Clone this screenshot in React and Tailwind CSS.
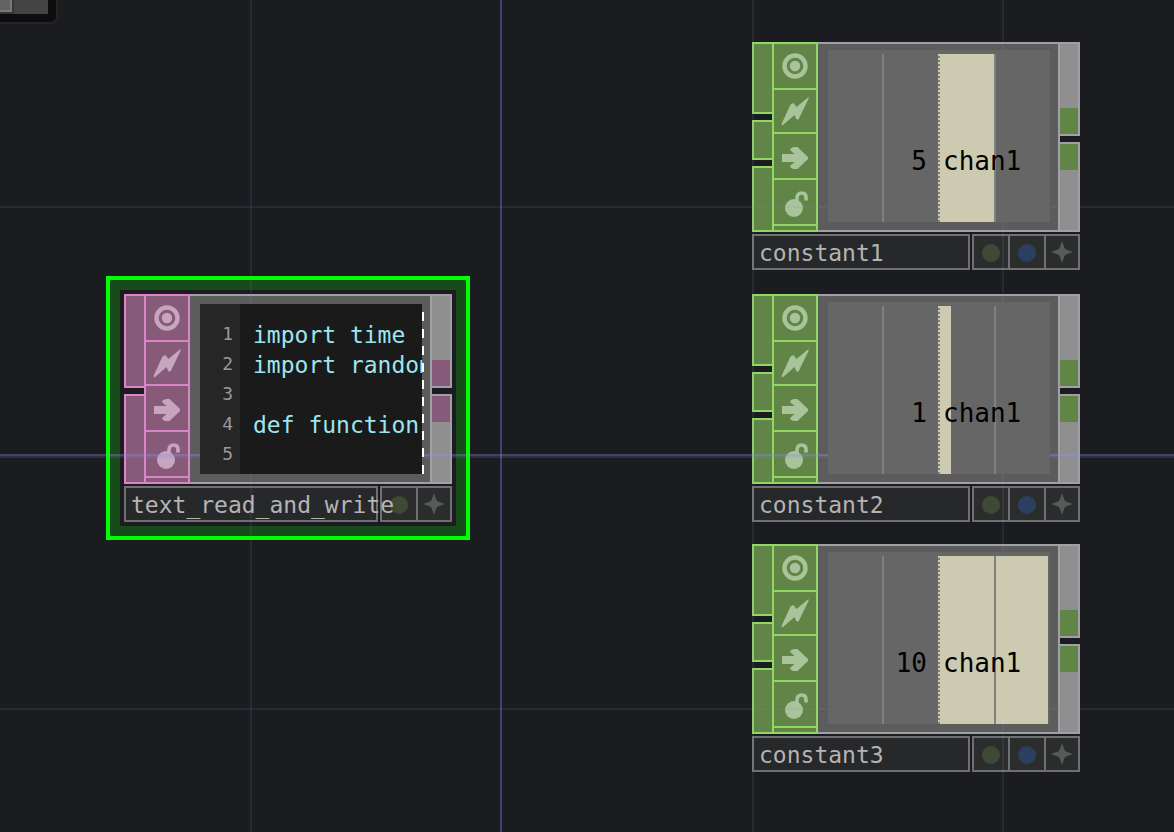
const palettes = {
  chop: {
    border: "border-[#90d765]",
    line: "bg-[#90d765]",
    fill: "bg-[#608546]",
    icon: "text-[#a9c39a]",
  },
  dat: {
    border: "border-[#dc84c8]",
    line: "bg-[#dc84c8]",
    fill: "bg-[#885a79]",
    icon: "text-[#c6a6bf]",
  },
}

const constants = [
  { name: "constant1", value: 5, top: "top-[42px]" },
  { name: "constant2", value: 1, top: "top-[294px]" },
  { name: "constant3", value: 10, top: "top-[544px]" },
]

const codeLines = ["import time", "import random", "", "def function():", ""]

function ViewerIcon() {
  return (
    <svg width="26" height="26" viewBox="0 0 26 26" fill="none">
      <circle cx="13" cy="13" r="10.5" stroke="currentColor" strokeWidth="4.4" />
      <circle cx="13" cy="13" r="5.2" fill="currentColor" />
    </svg>
  )
}

function BoltIcon() {
  return (
    <svg width="28" height="30" viewBox="0 0 28 30" fill="currentColor">
      <path d="M27.5 1 L27.5 3 L17.5 23.5 L15.5 23.5 L13.5 19 L1.5 29.5 L0.5 28 L9.5 8.5 L12.5 7 L15.5 11 Z" />
    </svg>
  )
}

function ArrowIcon() {
  return (
    <svg width="26" height="24" viewBox="0 0 26 24" fill="currentColor">
      <path d="M0 8 H12.5 L8 4 Q8.5 1.5 12 1 H15.5 L26 11 V13 L15.5 23 H12 Q8.5 22.5 8 20 L12.5 16 H0 Z" />
    </svg>
  )
}

function LockIcon() {
  return (
    <svg width="26" height="30" viewBox="0 0 26 30" fill="none">
      <circle cx="12" cy="20" r="9" fill="currentColor" />
      <path d="M15 14 V9.5 Q15.5 5 19.5 5 Q24 5 24 9.5 V12.5" stroke="currentColor" strokeWidth="3.6" />
    </svg>
  )
}

function StarIcon() {
  return (
    <svg width="22" height="22" viewBox="0 0 22 22" fill="#585a58">
      <path d="M11 0 L13.5 7 L15 8.5 L22 11 L15 13.5 L13.5 15 L11 22 L8.5 15 L7 13.5 L0 11 L7 8.5 L8.5 7 Z" />
    </svg>
  )
}

function Flag({ label, height, children }) {
  return (
    <button aria-label={label} className={`flex w-full shrink-0 items-center justify-center ${height}`}>
      {children}
    </button>
  )
}

function Flags({ palette }) {
  return (
    <div className={`flex w-[46px] shrink-0 flex-col border-2 ${palette.border} ${palette.fill} ${palette.icon}`}>
      <Flag label="Viewer active" height="h-11">
        <ViewerIcon />
      </Flag>
      <div className={`h-0.5 ${palette.line}`} />
      <Flag label="Bypass" height="h-[42px]">
        <BoltIcon />
      </Flag>
      <div className={`h-0.5 ${palette.line}`} />
      <Flag label="Export" height="h-11 pt-1">
        <ArrowIcon />
      </Flag>
      <div className={`h-0.5 ${palette.line}`} />
      <Flag label="Lock" height="h-11 pt-0.5">
        <LockIcon />
      </Flag>
      <div className={`h-0.5 ${palette.line}`} />
    </div>
  )
}

function Outputs({ palette }) {
  return (
    <div className="flex w-5 shrink-0 flex-col gap-1.5">
      <div className="flex h-[94px] flex-col justify-end border-y-2 border-r-2 border-[#a0a0a6] bg-[#8f8f8f]">
        <div className={`h-[26px] ${palette.fill}`} />
      </div>
      <div className="grow border-y-2 border-r-2 border-[#a0a0a6] bg-[#8f8f8f]">
        <div className={`h-[26px] ${palette.fill}`} />
      </div>
    </div>
  )
}

function Operator({ kind, name, inputs, children }) {
  const palette = palettes[kind]
  return (
    <div className="flex w-[328px] flex-col gap-0.5">
      <div className="flex h-[190px]">
        <div className="flex w-5 shrink-0 flex-col gap-1.5">
          {inputs.map((size, i) => (
            <div key={i} className={`border-y-2 border-l-2 ${size} ${palette.border} ${palette.fill}`} />
          ))}
        </div>
        <Flags palette={palette} />
        <div className="flex min-w-0 grow border-y-2 border-r-2 border-[#a0a0a6] bg-[#5c5c5c]">{children}</div>
        <Outputs palette={palette} />
      </div>
      <div className="flex h-9 gap-0.5">
        <div className="flex min-w-0 grow items-center border-2 border-[#707074] bg-[#27282a] pt-0.5 pl-[5px]">
          <span className="relative z-20 whitespace-nowrap text-[23px] leading-8 text-[#b4b4b4]">{name}</span>
        </div>
        <div className="flex shrink-0 divide-x-2 divide-[#707074] border-2 border-[#707074] bg-[#2b2d2c]">
          <button aria-label="Display" className="flex w-9 items-center justify-center pt-0.5">
            <span className="size-[18px] rounded-full bg-[#3e4a36]" />
          </button>
          {kind === "chop" && (
            <button aria-label="Export flag" className="flex w-9 items-center justify-center pt-0.5">
              <span className="size-[18px] rounded-full bg-[#2d3f60]" />
            </button>
          )}
          <button aria-label="Expose" className="flex w-8 items-center justify-center">
            <StarIcon />
          </button>
        </div>
      </div>
    </div>
  )
}

function ChannelViewer({ value }) {
  // the bar starts at the zero axis and is cut off at the viewer edge
  const width = Math.min(value * 11, 108)
  return (
    <div className="relative z-20 mt-1.5 mr-2 mb-2 ml-2.5 grow bg-[#666666]">
      <div className="absolute top-1 bottom-0 left-[112px] bg-[#cccbb2]" style={{ width }} />
      <div className="absolute top-1 bottom-0 left-[54px] w-0.5 bg-[#808080]" />
      <div className="absolute top-1 bottom-0 left-[166px] w-0.5 bg-[#808080]" />
      <div className="absolute top-1 bottom-0 left-[110px] w-0.5 bg-[repeating-linear-gradient(to_bottom,#cccbb2_0px,#cccbb2_2px,#808080_2px,#808080_4px)]" />
      <div className="absolute inset-x-0 top-[95px] flex text-[26px] leading-8 text-black">
        <span className="w-[99px] text-right">{value}</span>
        <span className="ml-4">chan1</span>
      </div>
    </div>
  )
}

function CodeViewer() {
  return (
    <div className="relative z-20 mt-2 mr-1.5 mb-2 ml-2.5 flex min-w-0 grow overflow-hidden">
      <div className="w-10 shrink-0 bg-[#262626] pt-[15px] pr-[7px] text-right text-[18px] leading-[30px] text-[#9a9a9a]">
        {codeLines.map((_, i) => (
          <div key={i} className="h-[30px]">
            {i + 1}
          </div>
        ))}
      </div>
      <pre className="min-w-0 grow overflow-hidden bg-[#1a1a1a] pt-4 pl-[13px] font-[DejaVu_Sans_Mono,monospace] text-[23px] leading-[30px] text-[#9de5f0]">
        {codeLines.join("\n")}
      </pre>
      <div className="absolute top-0 right-0 h-2 w-0.5 bg-[#5c5c5c]" />
      <div className="absolute top-2 right-0 bottom-0 w-0.5 bg-[repeating-linear-gradient(to_bottom,#ffffff_0px,#ffffff_9px,#5c5c5c_9px,#5c5c5c_17px)]" />
    </div>
  )
}

function GridLines() {
  return (
    <div className="pointer-events-none absolute inset-0 z-10">
      <div className="absolute inset-y-0 left-[250px] w-0.5 bg-[#8c8cb4]/12" />
      <div className="absolute inset-y-0 left-[752px] w-0.5 bg-[#8c8cb4]/12" />
      <div className="absolute inset-y-0 left-[1002px] w-0.5 bg-[#8c8cb4]/12" />
      <div className="absolute inset-x-0 top-[206px] h-0.5 bg-[#8c8cb4]/12" />
      <div className="absolute inset-x-0 top-[708px] h-0.5 bg-[#8c8cb4]/12" />
      <div className="absolute inset-y-0 left-[500px] w-0.5 bg-[#8c8cff]/35" />
      <div className="absolute inset-x-0 top-[454px] h-0.5 bg-[#8c8cff]/35" />
      <div className="absolute inset-x-0 top-[456px] h-0.5 bg-[#8c8cc8]/18" />
    </div>
  )
}

export default function App() {
  return (
    <main className="relative min-h-screen w-full overflow-hidden bg-[#1b1c20] font-[DejaVu_Sans_Mono,monospace]">
      <GridLines />

      {/* Corner of the docked panel */}
      <div className="absolute top-0 left-0 h-[24px] w-[58px] overflow-hidden rounded-br-lg border-r-2 border-b-2 border-[#242424] bg-[#0d0d0d]">
        <div className="h-3.5 w-12 bg-[#444444]">
          <div className="h-3.5 w-3.5 border-r-2 border-b-2 border-[#363636] bg-[#7a7a7a]">
            <div className="h-2.5 w-2.5 bg-[#626262]" />
          </div>
        </div>
      </div>

      {/* Selected DAT */}
      <div className="absolute top-[276px] left-[106px] border-4 border-[#00ff00] bg-[#174b1a] p-2.5">
        <div className="bg-[#1b1c20] p-1">
          <Operator kind="dat" name="text_read_and_write" inputs={["h-[94px]", "grow"]}>
            <CodeViewer />
          </Operator>
        </div>
      </div>

      {constants.map((op) => (
        <div key={op.name} className={`absolute left-[752px] ${op.top}`}>
          <Operator kind="chop" name={op.name} inputs={["h-[72px]", "h-10", "grow"]}>
            <ChannelViewer value={op.value} />
          </Operator>
        </div>
      ))}
    </main>
  )
}
